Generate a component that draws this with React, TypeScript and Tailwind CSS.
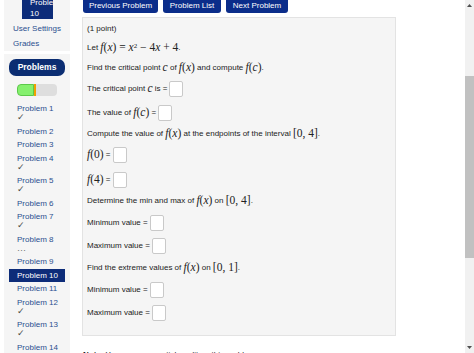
import React from "react";

const serif = "font-['Liberation_Serif',serif]";

function F({ a }: { a: string }) {
  return (
    <span className={`${serif} text-[11.5px]`}>
      <i>f</i>(<i>{a}</i>)
    </span>
  );
}

function Box() {
  return <span className="ml-[2px] inline-block h-[16px] w-[14px] rounded-[2px] border border-[#c9c9c9] bg-white" />;
}

function Row({ mt, children }: { mt: string; children: React.ReactNode }) {
  return <div className={`flex h-[16px] items-center whitespace-nowrap ${mt}`}>{children}</div>;
}

const problems: { n: number; mark?: string }[] = [
  { n: 1, mark: "✓" },
  { n: 2 },
  { n: 3 },
  { n: 4, mark: "✓" },
  { n: 5, mark: "✓" },
  { n: 6 },
  { n: 7, mark: "✓" },
  { n: 8, mark: "…" },
  { n: 9 },
  { n: 10 },
  { n: 11 },
  { n: 12, mark: "✓" },
  { n: 13, mark: "✓" },
  { n: 14 },
  { n: 15 },
];

export default function App() {
  return (
    <div className="flex h-[353px] w-[474px] overflow-hidden bg-white font-['Liberation_Sans',Arial,sans-serif] text-[8px] text-[#222]">
      <div className="flex min-w-0 flex-1">
        {/* Sidebar */}
        <div className="ml-[4px] flex w-[66px] shrink-0 flex-col">
          <div className="flex h-[51px] flex-col bg-[#f5f5f5]">
            <div className="ml-[18px] -mt-[3px] h-[22px] w-[31px] overflow-hidden bg-[#0d2c79] pl-[8px] leading-[11px] text-white">
              Problem 10
            </div>
            <div className="mt-[2px] pl-[9px] leading-[15px] text-[#2b4f8f]">User Settings</div>
            <div className="pl-[9px] leading-[15px] text-[#2b4f8f]">Grades</div>
          </div>
          <div className="mt-[3px] flex flex-1 flex-col bg-[#f5f5f5] px-[5px]">
            <div className="mt-[5px] flex h-[17px] items-center justify-center rounded-[7px] bg-[#0b2d72] text-[8.5px] font-bold text-white">
              Problems
            </div>
            <div className="ml-[8px] mt-[8px] flex h-[12px] w-[40px] overflow-hidden rounded-[4px] bg-[#dedede]">
              <div className="h-full w-[17px] rounded-l-[4px] border border-[#5cc94a] bg-[#85f06e]" />
              <div className="h-full w-[2px] bg-[#f0a000]" />
            </div>
            <div className="mt-[6px] flex flex-col">
              {problems.map((p) => (
                <div
                  key={p.n}
                  className={`py-[2.25px] pl-[8px] leading-[9px] ${
                    p.n === 10 ? "bg-[#0d2c79] text-white" : "text-[#2b4f8f]"
                  }`}
                >
                  <div>Problem {p.n}</div>
                  {p.mark && (
                    <div
                      className={`h-[9px] font-['DejaVu_Sans',sans-serif] text-[9px] leading-[9px] ${
                        p.mark === "…" ? "text-[#777]" : "text-[#4a4a4a]"
                      }`}
                    >
                      {p.mark}
                    </div>
                  )}
                </div>
              ))}
            </div>
          </div>
        </div>

        {/* Main */}
        <div className="ml-[12px] flex w-[314px] shrink-0 flex-col">
          <div className="-mt-[4px] ml-[1px] flex gap-[5px]">
            <div className="flex h-[17px] w-[75px] items-center justify-center rounded-[3px] bg-[#0b2d8a] pt-[3px] text-white">
              Previous Problem
            </div>
            <div className="flex h-[17px] w-[58px] items-center justify-center rounded-[3px] bg-[#0b2d8a] pt-[3px] text-white">
              Problem List
            </div>
            <div className="flex h-[17px] w-[62px] items-center justify-center rounded-[3px] bg-[#0b2d8a] pt-[3px] text-white">
              Next Problem
            </div>
          </div>
          <div className="mt-[4px] h-[319px] shrink-0 border border-[#e3e3e3] bg-[#f5f5f5] pl-[4px]">
            <Row mt="mt-[3px]">(1 point)</Row>
            <Row mt="mt-[3px]">
              Let&nbsp;
              <span className={`${serif} text-[11.5px]`}>
                <i>f</i>(<i>x</i>) = <i>x</i>
                <sup className="text-[7px]">2</sup> − 4<i>x</i> + 4
              </span>
              .
            </Row>
            <Row mt="mt-[4px]">
              Find the critical point&nbsp;<i className={`${serif} text-[11.5px]`}>c</i>&nbsp;of&nbsp;<F a="x" />
              &nbsp;and compute&nbsp;<F a="c" />.
            </Row>
            <Row mt="mt-[5px]">
              The critical point&nbsp;<i className={`${serif} text-[11.5px]`}>c</i>&nbsp;is =<Box />
            </Row>
            <Row mt="mt-[8px]">
              The value of&nbsp;<F a="c" />&nbsp;=<Box />
            </Row>
            <Row mt="mt-[5px]">
              Compute the value of&nbsp;<F a="x" />&nbsp;at the endpoints of the interval&nbsp;
              <span className={`${serif} text-[11.5px]`}>[0, 4]</span>.
            </Row>
            <Row mt="mt-[5px]">
              <span className={`${serif} text-[11.5px]`}>
                <i>f</i>(0)
              </span>
              &nbsp;=<Box />
            </Row>
            <Row mt="mt-[9px]">
              <span className={`${serif} text-[11.5px]`}>
                <i>f</i>(4)
              </span>
              &nbsp;=<Box />
            </Row>
            <Row mt="mt-[5px]">
              Determine the min and max of&nbsp;<F a="x" />&nbsp;on&nbsp;
              <span className={`${serif} text-[11.5px]`}>[0, 4]</span>.
            </Row>
            <Row mt="mt-[6px]">
              Minimum value =<Box />
            </Row>
            <Row mt="mt-[7px]">
              Maximum value =<Box />
            </Row>
            <Row mt="mt-[6px]">
              Find the extreme values of&nbsp;<F a="x" />&nbsp;on&nbsp;
              <span className={`${serif} text-[11.5px]`}>[0, 1]</span>.
            </Row>
            <Row mt="mt-[6px]">
              Minimum value =<Box />
            </Row>
            <Row mt="mt-[7px]">
              Maximum value =<Box />
            </Row>
          </div>
          <div className="ml-[1px] mt-[14px] shrink-0 whitespace-nowrap leading-[10px]">
            <b>Note:</b> You can earn partial credit on this problem.
          </div>
        </div>
      </div>

      {/* Scrollbar */}
      <div className="flex w-[9px] shrink-0 flex-col bg-[#f1f1f1]">
        <div className="flex h-[11px] items-center justify-center">
          <svg width="5" height="3" viewBox="0 0 5 3">
            <path d="M0 3 L2.5 0 L5 3 Z" fill="#505050" />
          </svg>
        </div>
        <div className="mt-[65px] h-[182px] bg-[#c1c1c1]" />
        <div className="flex-1" />
        <div className="flex h-[11px] items-center justify-center">
          <svg width="5" height="3" viewBox="0 0 5 3">
            <path d="M0 0 L2.5 3 L5 0 Z" fill="#505050" />
          </svg>
        </div>
      </div>
    </div>
  );
}
